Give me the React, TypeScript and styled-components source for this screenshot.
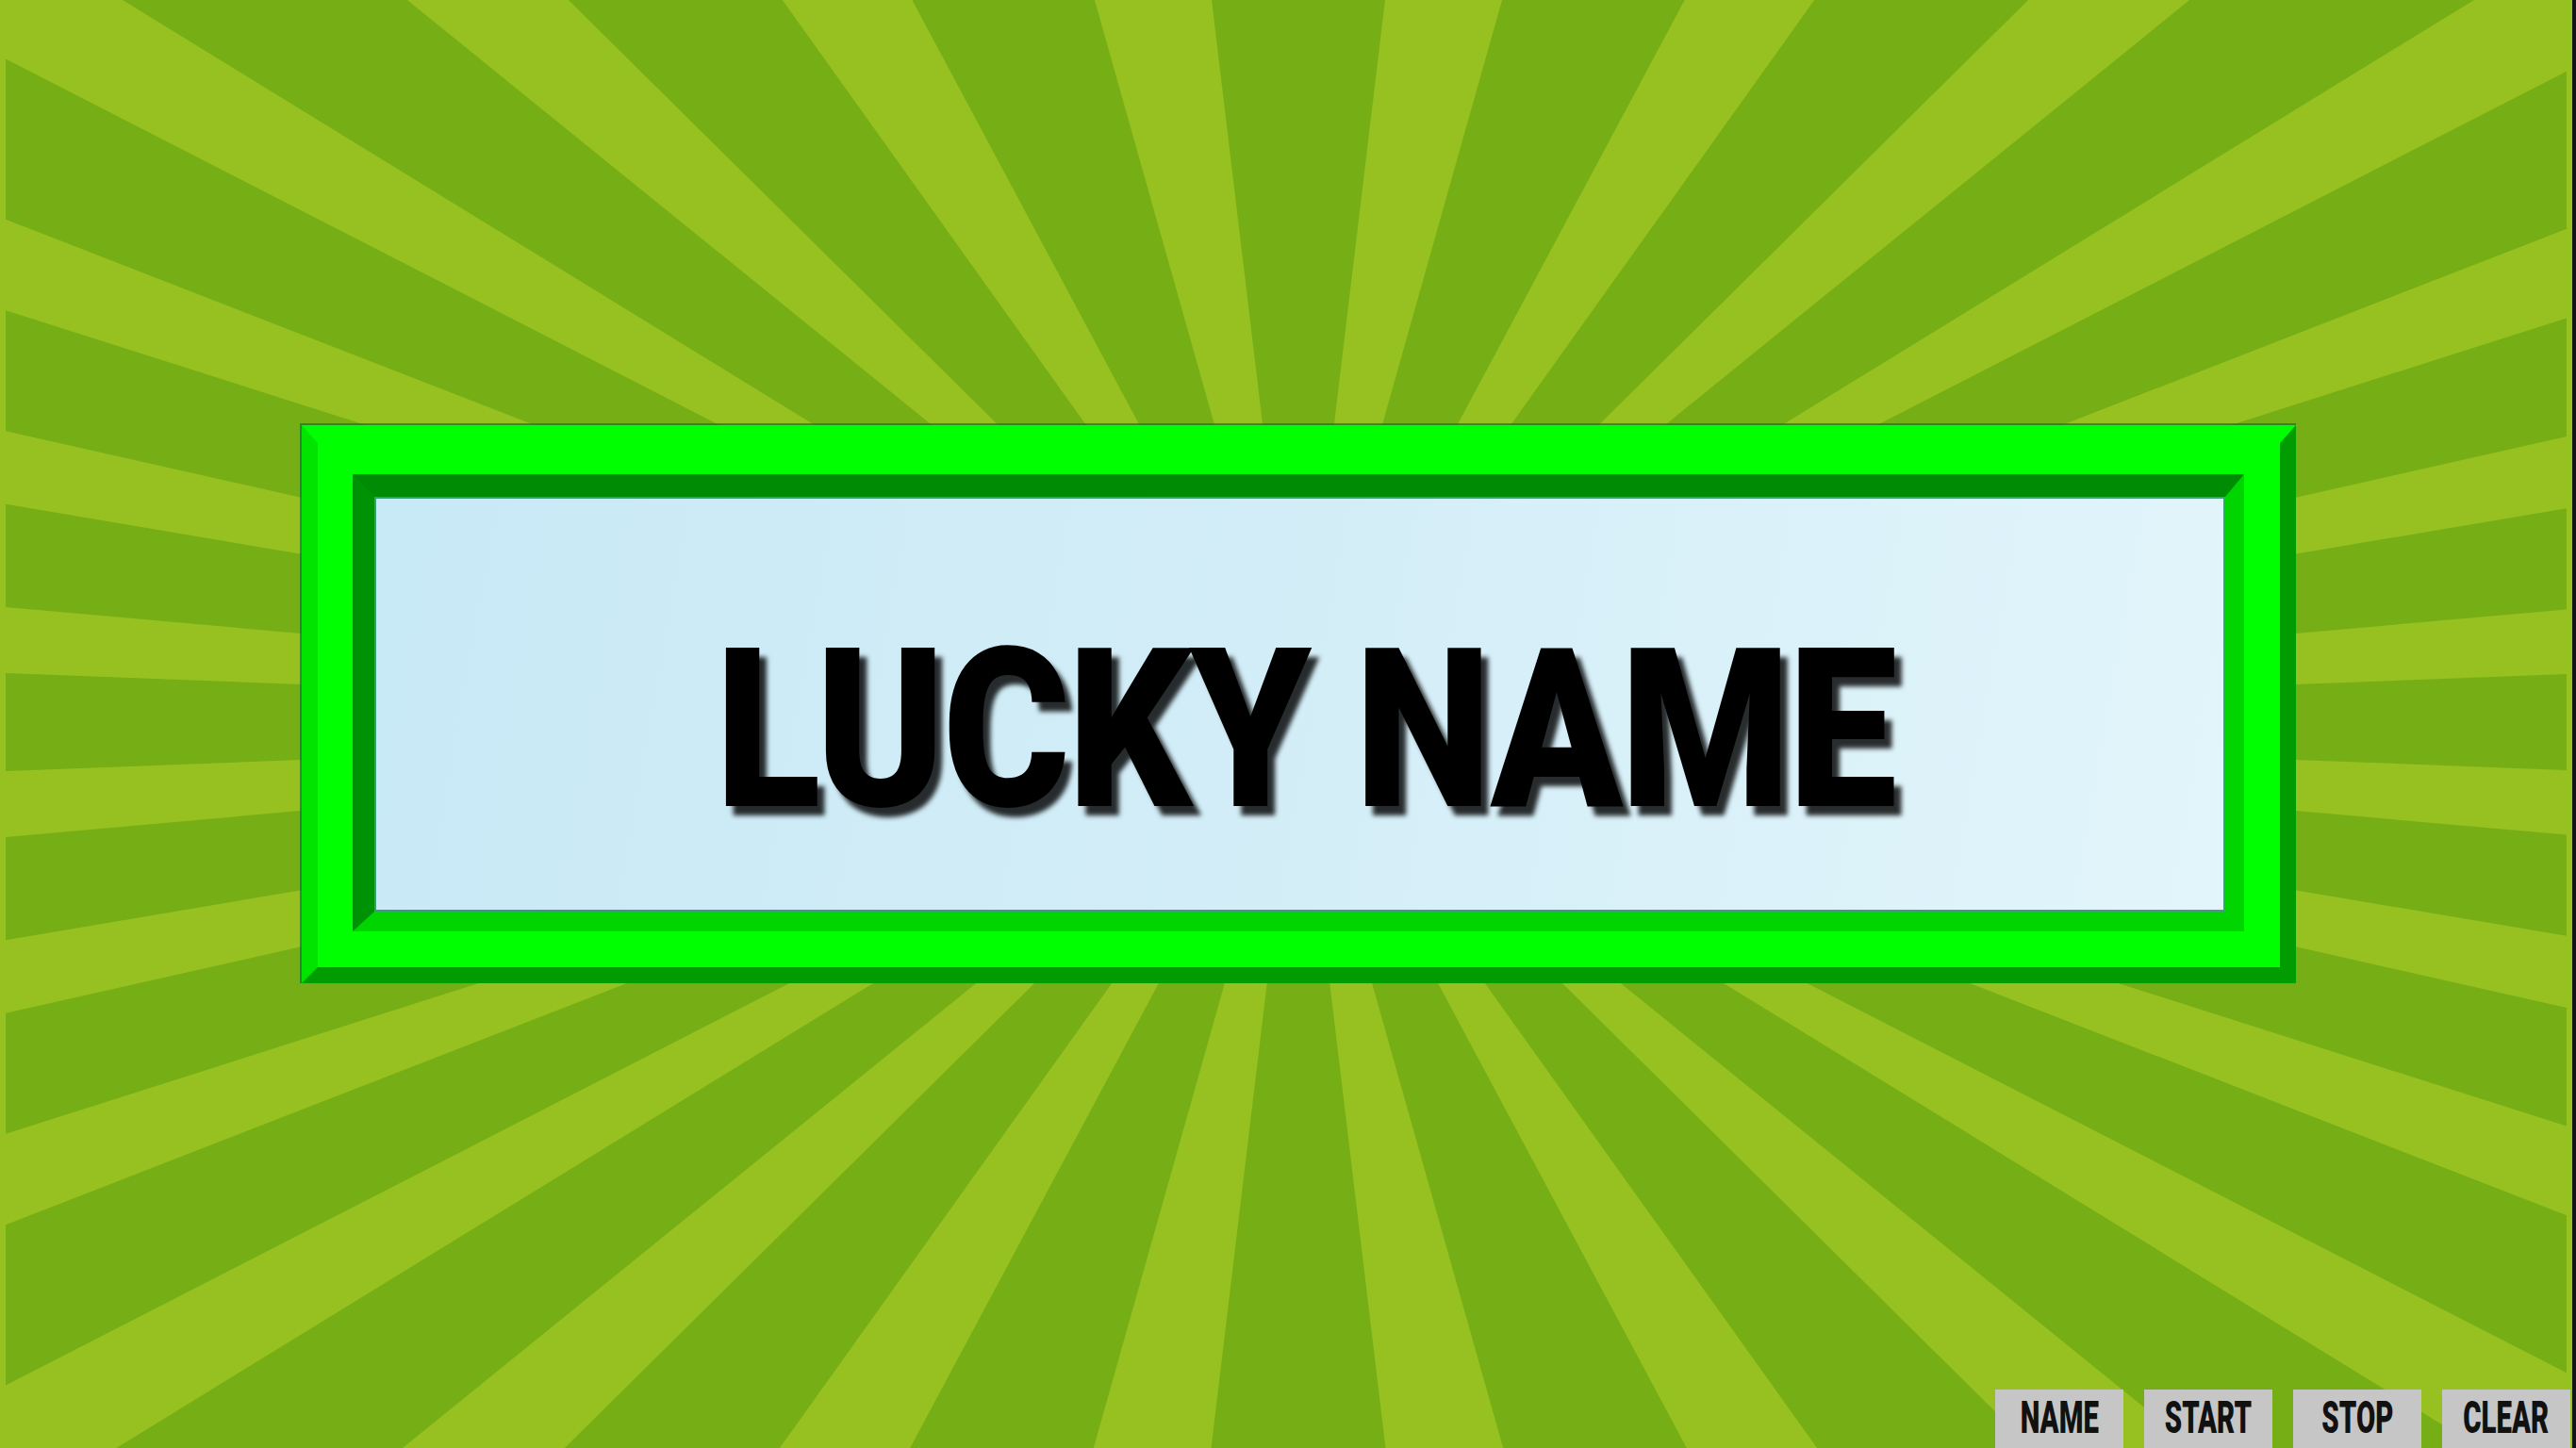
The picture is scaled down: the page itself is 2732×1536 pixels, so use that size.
import React from "react";
import styled, { createGlobalStyle } from "styled-components";

const GlobalStyle = createGlobalStyle`
  html, body {
    margin: 0;
    padding: 0;
    overflow: hidden;
    background: #96c120;
  }
  * { box-sizing: border-box; }
`;

const LIGHT = "#96c120";
const DARK = "#76ae15";

const Stage = styled.div`
  position: relative;
  width: 2732px;
  height: 1536px;
  overflow: hidden;
  background: ${LIGHT};
  border-right: 4px solid #141414;
  display: flex;
  flex-direction: column;
  font-family: Roboto, "Liberation Sans", Arial, sans-serif;
`;

const Burst = styled.svg`
  position: absolute;
  top: 0;
  left: 6px;
  width: 2716px;
  height: 1536px;
  z-index: 0;
  display: block;
`;

const Content = styled.div`
  position: relative;
  z-index: 1;
  flex: 1;
  display: flex;
  flex-direction: column;
  padding: 451px 0 0 320px;
`;

const Frame = styled.div`
  width: 2115px;
  height: 592px;
  display: flex;
  background: #00ff00;
  border-style: solid;
  border-width: 19px 17px 17px 17px;
  border-color: #00ff00 #009c00 #009c00 #00e400;
  padding: 33px 38px 38px 37px;
  box-shadow: -1px -1px 0 1px rgba(20, 120, 50, 0.75);
`;

const Panel = styled.div`
  flex: 1;
  display: flex;
  justify-content: center;
  align-items: flex-start;
  padding: 130px 0 0 12px;
  border-style: solid;
  border-width: 24px 20px 21px 23px;
  border-color: #008b05 #00d500 #00d500 #009205;
  background: linear-gradient(100deg, #c8e9f6 0%, #d2edf7 45%, #e2f5fb 100%);
  box-shadow: inset 0 0 0 2px rgba(12, 130, 80, 0.75);
`;

const Title = styled.h1`
  margin: 0;
  font-family: Roboto, "Liberation Sans", Arial, sans-serif;
  font-weight: 900;
  font-size: 235px;
  line-height: 1;
  letter-spacing: -3px;
  color: #000;
  white-space: nowrap;
  text-shadow: 9px 10px 6px rgba(0, 0, 0, 0.82);
  transform: scaleX(0.877);
`;

const ButtonRow = styled.div`
  margin-top: auto;
  display: flex;
  justify-content: flex-end;
  gap: 22px;
  padding-right: 2px;
`;

const ControlButton = styled.button`
  width: 136px;
  height: 62px;
  border: none;
  margin: 0;
  padding: 0 0 4px 0;
  background: #c6c6c6;
  display: flex;
  align-items: center;
  justify-content: center;
  cursor: pointer;
`;

const ButtonLabel = styled.span`
  display: inline-block;
  font-family: Roboto, "Liberation Sans", Arial, sans-serif;
  font-weight: 900;
  font-size: 49px;
  line-height: 1;
  color: #111;
  transform: scaleX(0.6);
  white-space: nowrap;
`;

const S = 1.781;
const CX = 1371;
const CY = 766;
const RAYS = 28;
const PERIOD = 360 / RAYS;

const wedgePoints = (k: number) => {
  const c = k * PERIOD;
  const h = PERIOD * 0.3;
  const a1 = ((c - h) * Math.PI) / 180;
  const a2 = ((c + h) * Math.PI) / 180;
  const R = 4000;
  return `0,0 ${(R * Math.sin(a1)).toFixed(2)},${(-R * Math.cos(a1)).toFixed(2)} ${(R * Math.sin(a2)).toFixed(2)},${(-R * Math.cos(a2)).toFixed(2)}`;
};

const Sunburst: React.FC = () => (
  <Burst
    viewBox={`${(-CX / S).toFixed(2)} ${-CY} ${(2716 / S).toFixed(2)} 1536`}
    preserveAspectRatio="none"
    aria-hidden="true"
  >
    <rect x={-2000} y={-2000} width={4000} height={4000} fill={LIGHT} />
    {Array.from({ length: RAYS }, (_, k) => (
      <polygon key={k} points={wedgePoints(k)} fill={DARK} />
    ))}
  </Burst>
);

const buttons = ["NAME", "START", "STOP", "CLEAR"];

export default function App() {
  return (
    <>
      <GlobalStyle />
      <Stage>
        <Sunburst />
        <Content>
          <Frame>
            <Panel>
              <Title>LUCKY NAME</Title>
            </Panel>
          </Frame>
          <ButtonRow>
            {buttons.map((b) => (
              <ControlButton key={b}>
                <ButtonLabel>{b}</ButtonLabel>
              </ControlButton>
            ))}
          </ButtonRow>
        </Content>
      </Stage>
    </>
  );
}
